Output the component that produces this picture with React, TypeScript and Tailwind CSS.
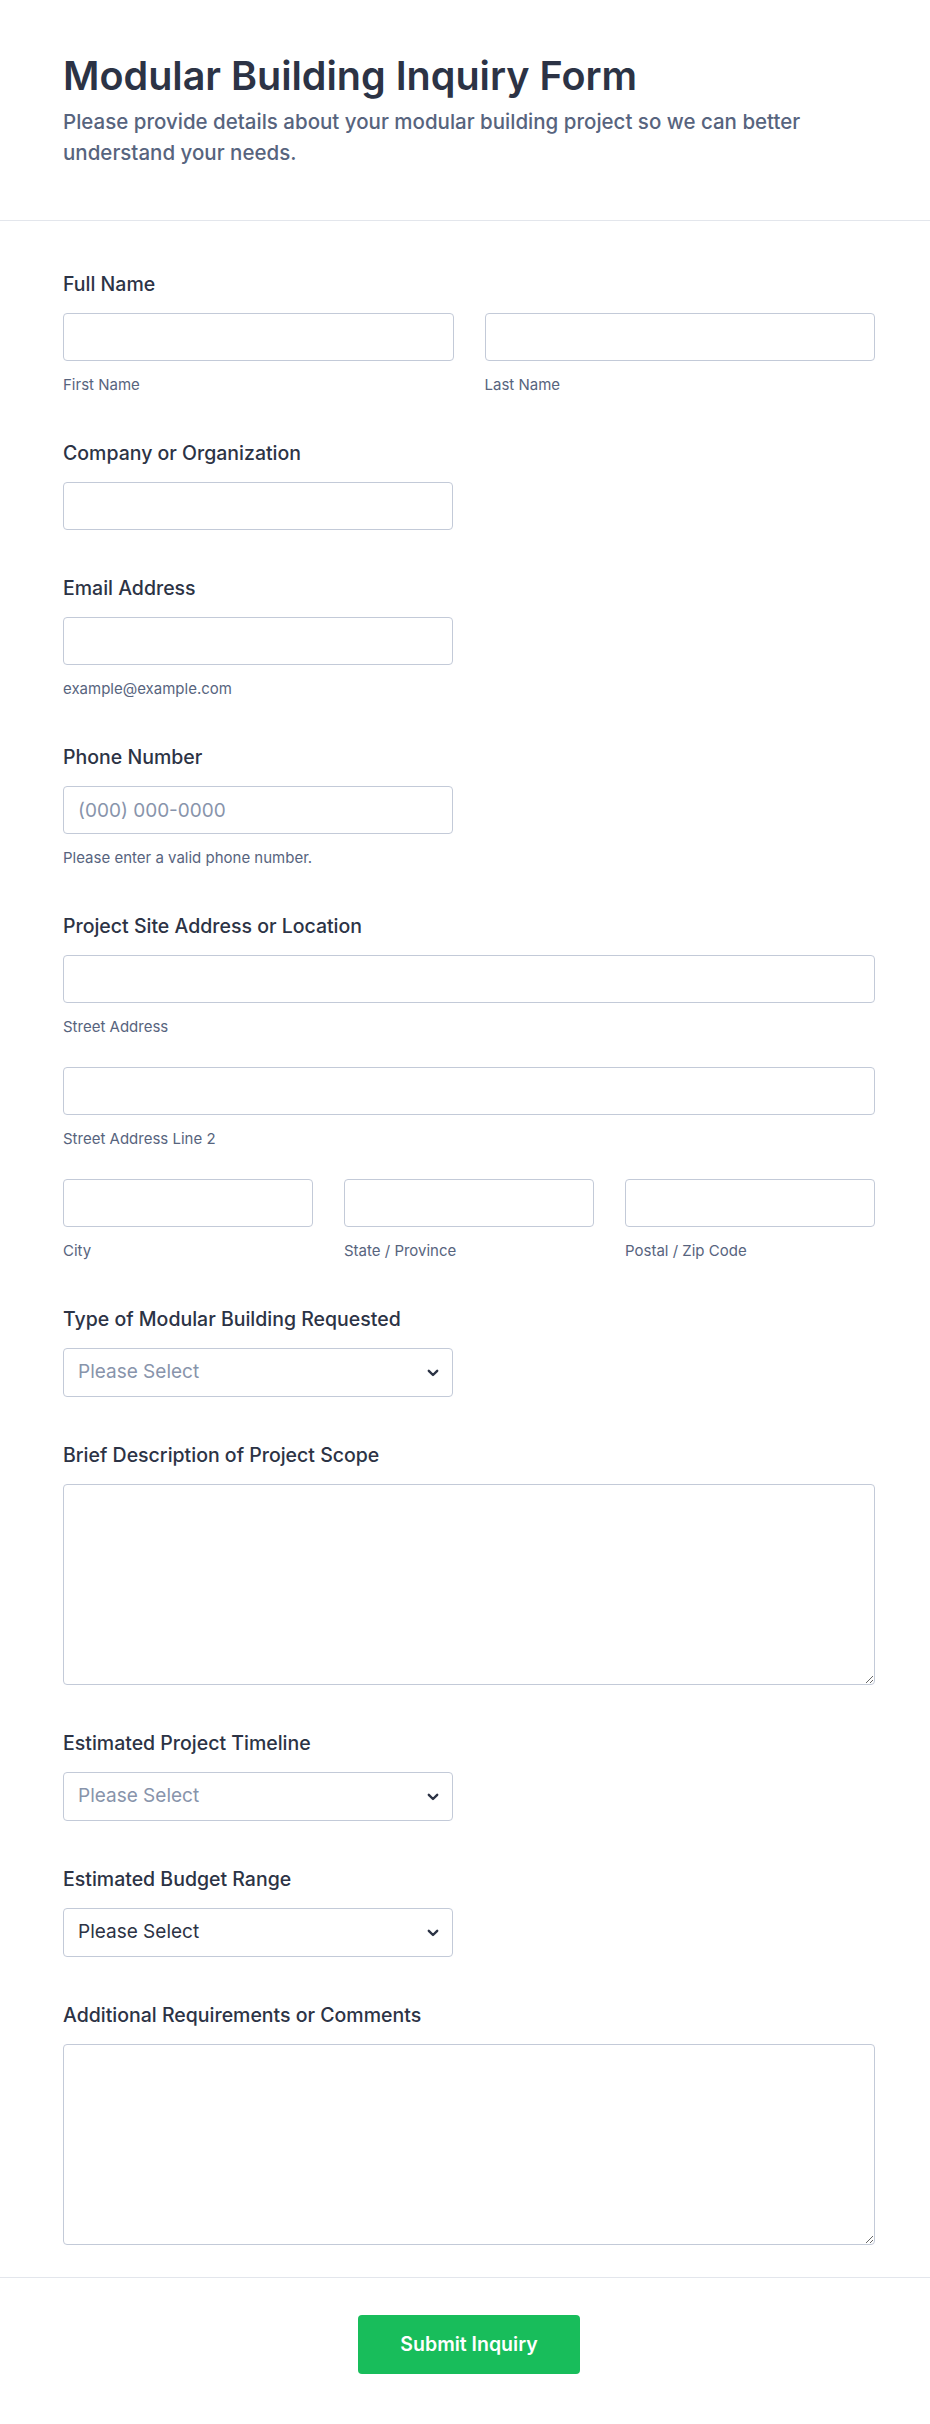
/**
 * Modular Building Inquiry Form
 */

import type { ReactNode } from 'react';

const inputClass =
  'block w-full h-[48px] rounded-[4px] border border-[#c3cad8] bg-white px-[14px] text-[19px] text-[#2c3345] placeholder:text-[#8894ab] outline-none';

function Label({ children }: { children: ReactNode }) {
  return (
    <label className="block text-[19.5px] leading-[28px] font-medium text-[#2c3345] mb-[15px]">
      {children}
    </label>
  );
}

function SubLabel({ children }: { children: ReactNode }) {
  return <div className="mt-[14px] text-[15px] leading-[20px] text-[#57647e]">{children}</div>;
}

function Chevron() {
  return (
    <svg
      width="12"
      height="8"
      viewBox="0 0 12 8"
      fill="none"
      className="pointer-events-none absolute right-[14px] top-1/2 -translate-y-1/2"
    >
      <path d="M1.8 1.8l4.2 4.2 4.2-4.2" stroke="#2c3345" strokeWidth="2.4" strokeLinecap="round" strokeLinejoin="round" />
    </svg>
  );
}

function SelectBox({ muted }: { muted?: boolean }) {
  return (
    <div className="relative w-[390px]">
      <select
        defaultValue=""
        className={`block w-full h-[49px] appearance-none rounded-[4px] border border-[#c3cad8] bg-white pl-[14px] pr-[40px] text-[19px] outline-none ${
          muted ? 'text-[#8894ab]' : 'text-[#2c3345]'
        }`}
      >
        <option value="">Please Select</option>
      </select>
      <Chevron />
    </div>
  );
}

export default function App() {
  return (
    <div className="min-h-screen bg-white font-['Inter',sans-serif] text-[#2c3345]">
      <header className="border-b border-[#e3e6ec] pl-[63px] pr-[55px] pt-[52px] pb-[52px]">
        <h1 className="text-[39.5px] leading-[48px] font-semibold text-[#2c3345]">
          Modular Building Inquiry Form
        </h1>
        <p className="mt-[6px] text-[20.5px] leading-[31px] font-medium text-[#57647e]">
          Please provide details about your modular building project so we can better understand your needs.
        </p>
      </header>

      <form className="flex flex-col gap-[44px] border-b border-[#e3e6ec] pl-[63px] pr-[55px] pt-[49px] pb-[32px]">
        <div>
          <Label>Full Name</Label>
          <div className="grid grid-cols-2 gap-[31px]">
            <div>
              <input className={inputClass} />
              <SubLabel>First Name</SubLabel>
            </div>
            <div>
              <input className={inputClass} />
              <SubLabel>Last Name</SubLabel>
            </div>
          </div>
        </div>

        <div>
          <Label>Company or Organization</Label>
          <div className="w-[390px]">
            <input className={inputClass} />
          </div>
        </div>

        <div>
          <Label>Email Address</Label>
          <div className="w-[390px]">
            <input type="email" className={inputClass} />
          </div>
          <SubLabel>example@example.com</SubLabel>
        </div>

        <div>
          <Label>Phone Number</Label>
          <div className="w-[390px]">
            <input type="tel" placeholder="(000) 000-0000" className={inputClass} />
          </div>
          <SubLabel>Please enter a valid phone number.</SubLabel>
        </div>

        <div>
          <Label>Project Site Address or Location</Label>
          <input className={inputClass} />
          <SubLabel>Street Address</SubLabel>
          <input className={`${inputClass} mt-[30px]`} />
          <SubLabel>Street Address Line 2</SubLabel>
          <div className="mt-[30px] grid grid-cols-3 gap-[31px]">
            <div>
              <input className={inputClass} />
              <SubLabel>City</SubLabel>
            </div>
            <div>
              <input className={inputClass} />
              <SubLabel>State / Province</SubLabel>
            </div>
            <div>
              <input className={inputClass} />
              <SubLabel>Postal / Zip Code</SubLabel>
            </div>
          </div>
        </div>

        <div>
          <Label>Type of Modular Building Requested</Label>
          <SelectBox muted />
        </div>

        <div>
          <Label>Brief Description of Project Scope</Label>
          <textarea className="block w-full h-[201px] rounded-[4px] border border-[#c3cad8] bg-white px-[14px] py-[10px] text-[19px] outline-none" />
        </div>

        <div>
          <Label>Estimated Project Timeline</Label>
          <SelectBox muted />
        </div>

        <div>
          <Label>Estimated Budget Range</Label>
          <SelectBox />
        </div>

        <div>
          <Label>Additional Requirements or Comments</Label>
          <textarea className="block w-full h-[201px] rounded-[4px] border border-[#c3cad8] bg-white px-[14px] py-[10px] text-[19px] outline-none" />
        </div>
      </form>

      <div className="flex justify-center pl-[63px] pr-[55px] pt-[37px] pb-[49px]">
        <button
          type="button"
          className="h-[59px] w-[222px] rounded-[4px] bg-[#18bd5b] text-[19.5px] font-semibold text-white"
        >
          Submit Inquiry
        </button>
      </div>
    </div>
  );
}
